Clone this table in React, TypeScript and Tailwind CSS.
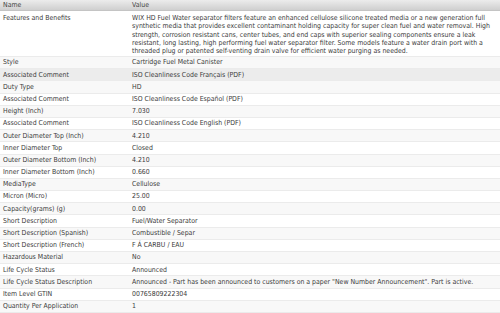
import React from "react";

const rows: [string, string][] = [
  ["Style", "Cartridge Fuel Metal Canister"],
  ["Associated Comment", "ISO Cleanliness Code Français (PDF)"],
  ["Duty Type", "HD"],
  ["Associated Comment", "ISO Cleanliness Code Español (PDF)"],
  ["Height (Inch)", "7.030"],
  ["Associated Comment", "ISO Cleanliness Code English (PDF)"],
  ["Outer Diameter Top (Inch)", "4.210"],
  ["Inner Diameter Top", "Closed"],
  ["Outer Diameter Bottom (Inch)", "4.210"],
  ["Inner Diameter Bottom (Inch)", "0.660"],
  ["MediaType", "Cellulose"],
  ["Micron (Micro)", "25.00"],
  ["Capacity(grams) (g)", "0.00"],
  ["Short Description", "Fuel/Water Separator"],
  ["Short Description (Spanish)", "Combustible / Separ"],
  ["Short Description (French)", "F Á CARBU / EAU"],
  ["Hazardous Material", "No"],
  ["Life Cycle Status", "Announced"],
  [
    "Life Cycle Status Description",
    'Announced - Part has been announced to customers on a paper "New Number Announcement". Part is active.',
  ],
  ["Item Level GTIN", "00765809222304"],
  ["Quantity Per Application", "1"],
];

export default function App() {
  return (
    <div
      className="w-[500px] h-[313px] overflow-hidden bg-white text-[#3a3a3a] text-[6.9px]"
      style={{ fontFamily: "'DejaVu Sans Condensed', 'DejaVu Sans', sans-serif" }}
    >
      <div className="flex h-[11px] items-center bg-gradient-to-b from-[#ececec] to-[#cfcfcf] border-b border-[#c4c4c4] text-[#444]">
        <div className="w-[129px] pl-[3px]">Name</div>
        <div className="flex-1 pl-[3px]">Value</div>
      </div>
      <div className="flex h-[46px] pt-[3px] border-b border-[#ebebeb] leading-[8.3px]">
        <div className="w-[129px] pl-[3px]">Features and Benefits</div>
        <div className="flex-1 pl-[3px] pr-[6px]">
          WIX HD Fuel Water separator filters feature an enhanced cellulose silicone treated media or a new generation full
          synthetic media that provides excellent contaminant holding capacity for super clean fuel and water removal. High
          strength, corrosion resistant cans, center tubes, and end caps with superior sealing components ensure a leak
          resistant, long lasting, high performing fuel water separator filter. Some models feature a water drain port with a
          threaded plug or patented self-venting drain valve for efficient water purging as needed.
        </div>
      </div>
      {rows.map(([n, v], i) => (
        <div
          key={i}
          className={
            "flex h-[12.2px] items-center border-b border-[#ebebeb] whitespace-nowrap " +
            (i === 1 ? "bg-[#ececec]" : i % 2 === 0 ? "bg-[#f8f8f8]" : "bg-white")
          }
        >
          <div className="w-[129px] pl-[3px]">{n}</div>
          <div className="flex-1 pl-[3px]">{v}</div>
        </div>
      ))}
    </div>
  );
}
